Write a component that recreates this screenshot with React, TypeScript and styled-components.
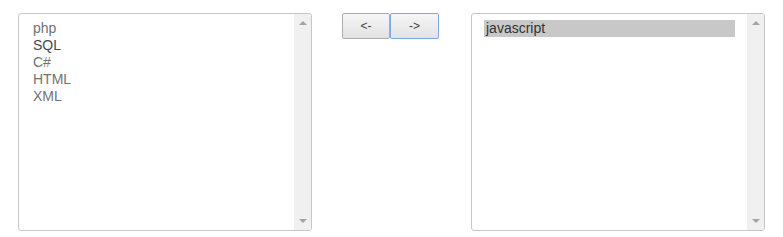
import React from "react";
import styled, { createGlobalStyle } from "styled-components";

const Global = createGlobalStyle`
  html, body { margin: 0; padding: 0; background: #fff; }
  body { font-family: "Liberation Sans", Arial, sans-serif; }
`;

const Page = styled.div`
  display: flex;
  align-items: flex-start;
  padding: 13px 0 0 18px;
`;

const ListBox = styled.div`
  box-sizing: border-box;
  width: 294px;
  height: 218px;
  border: 1px solid #c6c6c6;
  border-radius: 3px;
  display: flex;
  overflow: hidden;
  background: #fff;
`;

const Items = styled.ul`
  flex: 1;
  list-style: none;
  margin: 0;
  padding: 6px 12px 0 12px;
`;

const Item = styled.li<{ $selected?: boolean; $dark?: boolean }>`
  height: 17px;
  line-height: 17px;
  font-size: 14px;
  padding-left: 2px;
  color: ${(p) => (p.$selected ? "#333" : p.$dark ? "#474747" : "#727272")};
  background: ${(p) => (p.$selected ? "#c8c8c8" : "transparent")};
`;

const Scroll = styled.div`
  width: 17px;
  background: #f0f0f0;
  display: flex;
  flex-direction: column;
  justify-content: space-between;
  align-items: center;
  padding: 7px 0 7px;
`;

const Arrow = styled.div<{ $down?: boolean }>`
  width: 0;
  height: 0;
  border-left: 4px solid transparent;
  border-right: 4px solid transparent;
  ${(p) =>
    p.$down
      ? "border-top: 4px solid #a3a3a3;"
      : "border-bottom: 4px solid #a3a3a3;"}
`;

const Buttons = styled.div`
  display: flex;
  margin: 0 32px 0 30px;
`;

const Btn = styled.button<{ $focus?: boolean }>`
  box-sizing: border-box;
  width: ${(p) => (p.$focus ? "49px" : "48px")};
  height: 26px;
  margin: 0;
  padding: 0;
  font-family: "Liberation Sans", Arial, sans-serif;
  font-size: 12px;
  color: #444;
  background: linear-gradient(#f6f6f6, #e2e2e2);
  border: 1px solid ${(p) => (p.$focus ? "#7ea9dc" : "#acacac")};
  border-radius: 2px;
`;

function List({ items, selected, dark }: { items: string[]; selected?: string; dark?: string }) {
  return (
    <ListBox>
      <Items>
        {items.map((t) => (
          <Item key={t} $selected={t === selected} $dark={t === dark}>
            {t}
          </Item>
        ))}
      </Items>
      <Scroll>
        <Arrow />
        <Arrow $down />
      </Scroll>
    </ListBox>
  );
}

export default function App() {
  return (
    <>
      <Global />
      <Page>
        <List items={["php", "SQL", "C#", "HTML", "XML"]} dark="SQL" />
        <Buttons>
          <Btn>&lt;-</Btn>
          <Btn $focus>-&gt;</Btn>
        </Buttons>
        <List items={["javascript"]} selected="javascript" />
      </Page>
    </>
  );
}
